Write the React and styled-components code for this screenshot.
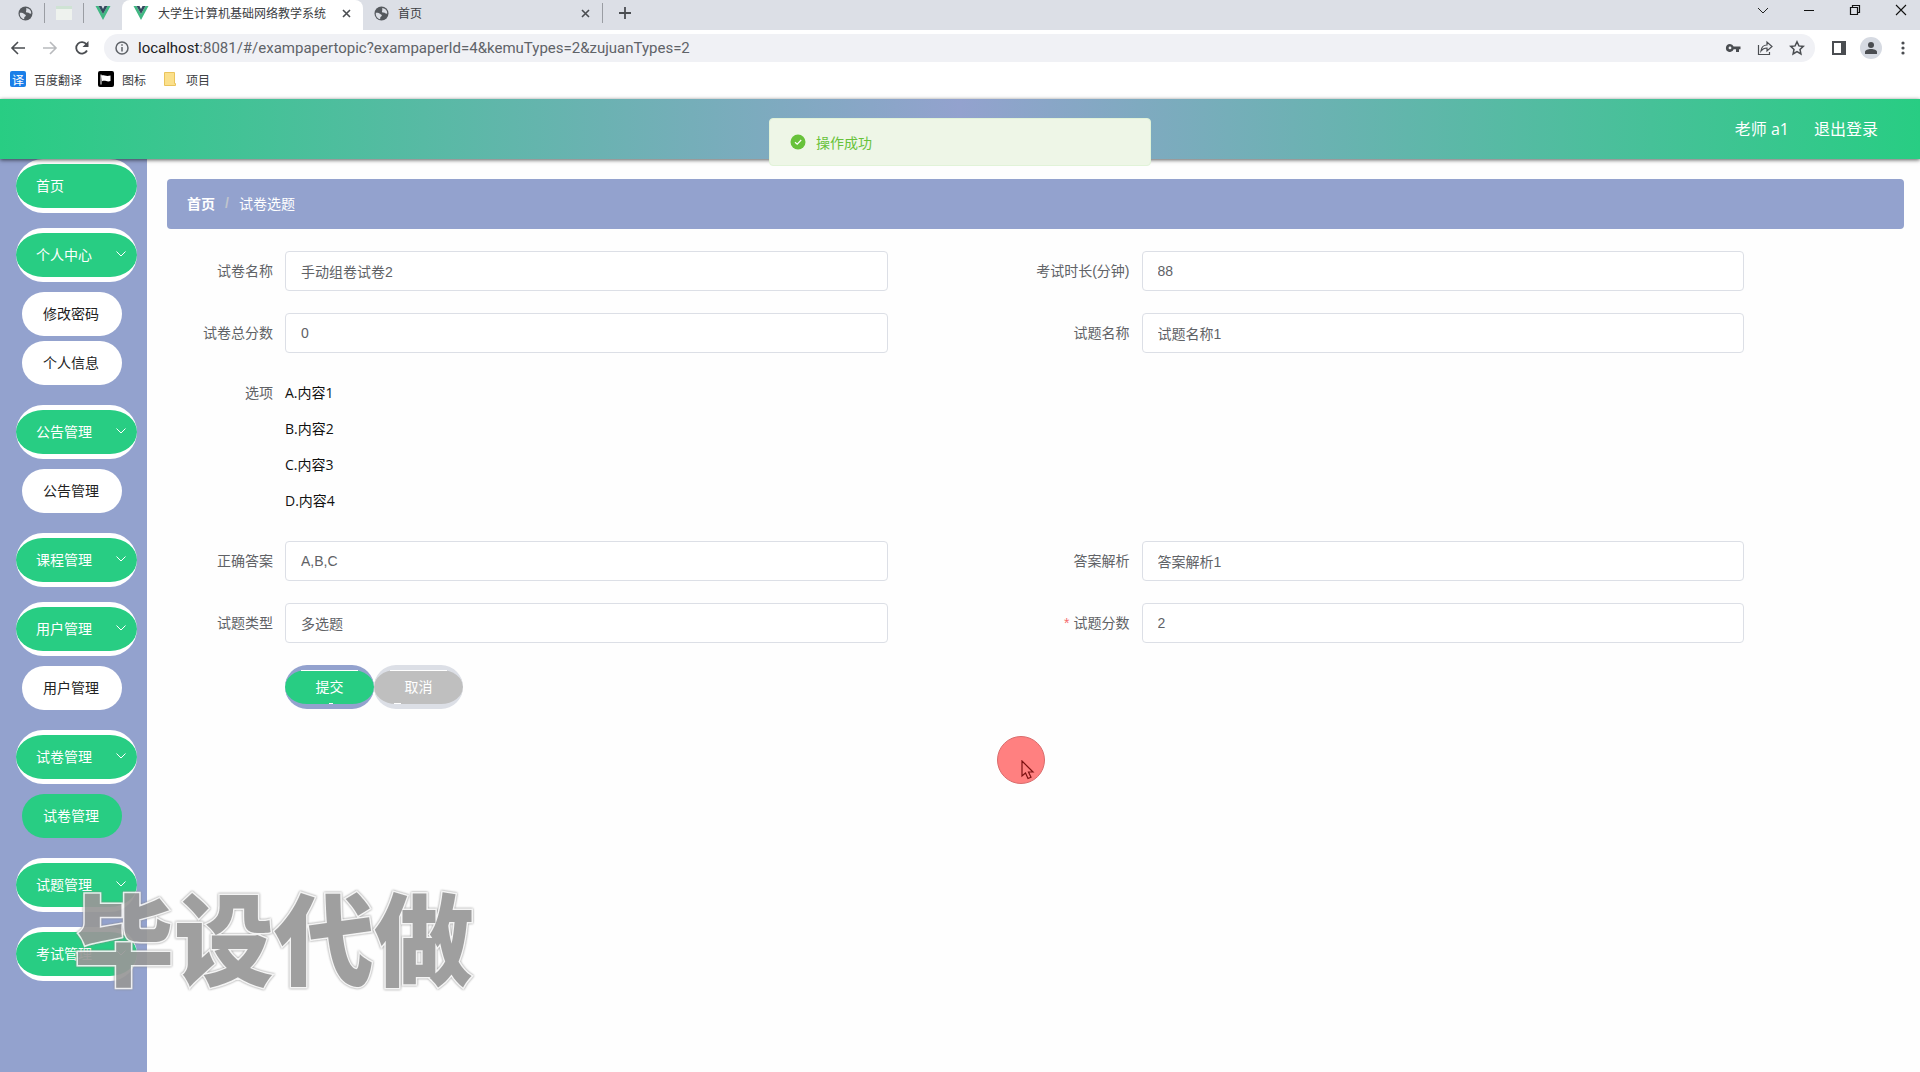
import React from "react";
import styled, { createGlobalStyle, css } from "styled-components";

const GREEN = "#28cd83";
const BLUE = "#93a2ce";
const UI = '"Open Sans", "Noto Sans CJK SC", sans-serif';
const PAGE = '"Liberation Sans", "Noto Sans CJK SC", sans-serif';

const GlobalStyle = createGlobalStyle`
  * { box-sizing: border-box; }
  body { margin: 0; background: #fefefe; font-family: ${PAGE}; font-size: 14px; }
  button, input { font-family: inherit; font-size: inherit; }
  button { cursor: pointer; }
`;

const Screen = styled.div`
  display: flex;
  flex-direction: column;
  min-height: 100vh;
`;

/* Browser chrome */
const TabStrip = styled.div`
  display: flex;
  align-items: center;
  height: 30px;
  padding: 0 11px 0 5px;
  background: #dcdfe6;
  font-family: ${UI};
  font-size: 12px;
  color: #3c4043;
`;
const PinnedTabs = styled.div`
  display: flex;
  align-items: center;
  width: 117px;
  padding-bottom: 4px;
`;
const Pin = styled.button`
  display: grid;
  place-items: center;
  width: 39px;
  height: 20px;
  padding: 0;
  border: 0;
  border-left: 1px solid ${(p) => (p.$line ? "#9a9da3" : "transparent")};
  background: none;
`;
const Tab = styled.div`
  display: flex;
  align-items: center;
  gap: 9px;
  width: ${(p) => p.$w}px;
  height: 30px;
  padding: 0 9px 4px 11px;
  border-radius: 8px 8px 0 0;
  background: ${(p) => (p.$active ? "#fff" : "transparent")};
`;
const TabTitle = styled.span`
  flex: 1;
  white-space: nowrap;
`;
const IconButton = styled.button`
  display: grid;
  place-items: center;
  flex: none;
  width: ${(p) => p.$w || 16}px;
  height: ${(p) => p.$w || 16}px;
  padding: 0;
  border: 0;
  border-radius: 50%;
  background: ${(p) => p.$bg || "none"};
  color: ${(p) => p.$color || "#4a4d51"};
`;
const NewTab = styled.div`
  height: 20px;
  margin-bottom: 4px;
  padding: 2px 14px;
  border-left: 1px solid #9a9da3;
`;
const WindowControls = styled.div`
  display: flex;
  gap: 30px;
  margin-left: auto;
  padding-bottom: 10px;
`;
const Toolbar = styled.div`
  display: flex;
  align-items: center;
  gap: 16px;
  height: 35px;
  padding: 0 9px 0 10px;
  background: #fff;
`;
const AddressBar = styled.div`
  display: flex;
  align-items: center;
  flex: 1;
  gap: 9px;
  height: 28px;
  margin-left: -2px;
  padding: 0 10px 0 11px;
  border-radius: 14px;
  background: #f0f1f5;
  font-family: Roboto, sans-serif;
  font-size: 15px;
  color: #5f6368;
`;
const Url = styled.span`
  flex: 1;
  b { font-weight: 400; color: #202124; }
`;
const AddressTools = styled.div`
  display: flex;
  gap: 16px;
`;
const BrowserTools = styled.div`
  display: flex;
  align-items: center;
  gap: 13px;
`;
const Bookmarks = styled.nav`
  display: flex;
  gap: 16px;
  height: 34px;
  padding: 5px 10px 0;
  background: #fff;
`;
const Bookmark = styled.a`
  display: flex;
  align-items: center;
  gap: 8px;
  height: 18px;
  font-size: 12px;
  color: #3c4043;
  text-decoration: none;
`;
const Translate = styled.span`
  display: grid;
  place-items: center;
  width: 16px;
  height: 16px;
  border-radius: 2px;
  background: #1a7fe8;
  color: #fff;
  font-size: 12px;
`;

/* Application */
const Header = styled.header`
  position: relative;
  z-index: 1;
  display: flex;
  align-items: center;
  justify-content: flex-end;
  gap: 25px;
  height: 60px;
  padding: 0 42px 2px;
  background: linear-gradient(90deg, ${GREEN}, ${BLUE}, ${GREEN});
  box-shadow: 0 1px 4px rgba(0, 0, 0, 0.65);
  color: #fff;
  font-family: ${UI};
  font-size: 16px;
`;
const Logout = styled.a`
  color: inherit;
  text-decoration: none;
`;
const Body = styled.div`
  display: flex;
  flex: 1;
`;
const Sidebar = styled.nav`
  display: flex;
  flex-direction: column;
  gap: 15px;
  width: 147px;
  padding: 0 10px 0 16px;
  background: ${BLUE};
`;
const MenuButton = styled.button`
  display: flex;
  align-items: center;
  justify-content: space-between;
  width: 100%;
  height: 54px;
  padding: 0 10px 2px 20px;
  border: solid #fff;
  border-width: 5px 0;
  border-radius: 30px;
  background: ${GREEN};
  color: #fff;
`;
const SubMenu = styled.ul`
  display: flex;
  flex-direction: column;
  gap: 5px;
  margin: 0;
  padding: 10px 0 5px 6px;
  list-style: none;
`;
const SubButton = styled.button`
  width: 100px;
  height: 44px;
  padding: 0 2px 2px 0;
  border: 0;
  border-radius: 22px;
  background: ${(p) => (p.$active ? GREEN : "#fff")};
  color: ${(p) => (p.$active ? "#fff" : "#222")};
`;
const Main = styled.main`
  flex: 1;
  min-width: 0;
  padding: 20px 16px 0 20px;
`;
const Breadcrumb = styled.nav`
  display: flex;
  align-items: center;
  gap: 10px;
  height: 50px;
  padding: 0 20px 2px;
  border-radius: 4px;
  background: ${BLUE};
  color: #fff;
  a { color: inherit; font-weight: 700; text-decoration: none; }
  i { color: #c0c4cc; font-style: normal; font-weight: 700; }
`;
const Form = styled.form`
  display: grid;
  grid-template-columns: 1fr 1fr;
  gap: 22px 136px;
  padding: 22px 160px 0 0;
`;
const Field = styled.div`
  display: flex;
  grid-column: ${(p) => (p.$wide ? "1 / -1" : "auto")};
  line-height: ${(p) => (p.$wide ? 36 : 40)}px;
`;
const labelStyle = css`
  flex: none;
  width: 118px;
  padding-right: 12px;
  color: #606266;
  text-align: right;
`;
const Label = styled.label`
  ${labelStyle}
  &::before { content: ${(p) => (p.$required ? '"*"' : "none")}; margin-right: 4px; color: #f56c6c; }
`;
const GroupLabel = styled.span`
  ${labelStyle}
`;
const Input = styled.input`
  flex: 1;
  min-width: 0;
  height: 40px;
  padding: 0 15px;
  border: 1px solid #dcdfe6;
  border-radius: 4px;
  background: #fff;
  color: #606266;
  outline: 0;
`;
const Options = styled.ul`
  margin: 0;
  padding: 0;
  list-style: none;
  color: #111;
  font-family: ${UI};
`;
const Actions = styled.div`
  display: flex;
  padding-left: 118px;
`;
const ActionButton = styled.button`
  position: relative;
  width: 89px;
  height: 44px;
  padding: 0 0 2px;
  border: solid ${(p) => (p.$plain ? "#dcdfe6" : BLUE)};
  border-width: 5px 0;
  border-radius: 22px;
  background: ${(p) => (p.$plain ? "#bfbfbf" : GREEN)};
  color: #fff;
  &::before {
    content: "";
    position: absolute;
    top: 0;
    left: 16px;
    right: 16px;
    height: 1px;
    background: #fff;
  }
  &::after {
    content: "";
    position: absolute;
    bottom: 0;
    left: ${(p) => (p.$plain ? 20 : 44)}px;
    width: ${(p) => (p.$plain ? 7 : 4)}px;
    height: 1px;
    background: #fff;
  }
`;
const Toast = styled.div`
  position: absolute;
  z-index: 2;
  top: 118px;
  left: 50%;
  display: flex;
  align-items: center;
  gap: 10px;
  width: 382px;
  height: 48px;
  padding: 0 20px;
  transform: translateX(-50%);
  border: 1px solid #e1f3d8;
  border-radius: 4px;
  background: #eef6e7;
  color: #67c23a;
`;
const Watermark = styled.div`
  position: absolute;
  z-index: 3;
  top: 862px;
  left: 74px;
  font: 900 100px/145px "Noto Sans CJK SC", sans-serif;
  color: #989898;
  opacity: 0.93;
  -webkit-text-stroke: 3px #f4f4f4;
  paint-order: stroke fill;
  filter: drop-shadow(0 0 1px #888);
  pointer-events: none;
`;
const Pointer = styled.div`
  position: absolute;
  z-index: 3;
  top: 736px;
  left: 997px;
  width: 48px;
  height: 48px;
  border-radius: 50%;
  background: #ff8080;
  border: 1px solid #d96c6c;
  pointer-events: none;
  svg { position: absolute; left: 23px; top: 23px; }
`;

const Vue = () => (
  <svg width="16" height="14" viewBox="0 0 15 14">
    <path d="M0 0h3l4.500 8L12 0h3L7.500 14z" fill="#41b883" />
    <path d="M3 0h3l1.500 3L9 0h3L7.500 8z" fill="#34495e" />
  </svg>
);
const Globe = () => (
  <svg width="15" height="15" viewBox="0 0 15 15">
    <circle cx="7.500" cy="7.500" r="7" fill="#55595e" />
    <path d="M1.800 6.800c1.700-.2 3.400.2 4.500 1.200.8.8 1.700.6 1.500 1.700-.2 1-1.600.9-1.500 2 .1.700-.1 1.200-.6 1.500C3 12.400 1.400 9.800 1.800 6.800zM8.500 1.900c1.900.3 3.600 1.500 4.400 3.300.3.900.3 1.700.3 2.400-1 .5-1.700-.3-2.500-.8-.9-.5-2-.1-2.600-.9-.5-.8.400-1.300.3-2.100-.1-.7-.5-1.200.1-1.900z" fill="#dcdfe6" />
  </svg>
);
const Cross = () => (
  <svg width="9" height="9" viewBox="0 0 9 9" stroke="currentColor" strokeWidth="1.600"><path d="M1 1l7 7M8 1L1 8" /></svg>
);
const Line = ({ size = 16, w = 1.6, d }) => (
  <svg width={size} height={size} viewBox="0 0 16 16" fill="none" stroke="currentColor" strokeWidth={w}><path d={d} /></svg>
);
const Chevron = () => (
  <svg width="12" height="8" viewBox="0 0 12 8" fill="none" stroke="#fff"><path d="M1.500 1.500L6 6l4.500-4.500" /></svg>
);

const menu = [
  { title: "首页" },
  { title: "个人中心", items: ["修改密码", "个人信息"] },
  { title: "公告管理", items: ["公告管理"] },
  { title: "课程管理", items: [] },
  { title: "用户管理", items: ["用户管理"] },
  { title: "试卷管理", items: ["试卷管理"], active: true },
  { title: "试题管理", items: [] },
  { title: "考试管理", items: [] },
];

const TextField = ({ id, label, value, required }) => (
  <Field>
    <Label htmlFor={id} $required={required}>{label}</Label>
    <Input id={id} defaultValue={value} />
  </Field>
);

export default function App() {
  return (
    <Screen>
      <GlobalStyle />
      <TabStrip>
        <PinnedTabs>
          <Pin aria-label="首页"><Globe /></Pin>
          <Pin $line aria-label="表格">
            <svg width="16" height="14" viewBox="0 0 16 14"><path d="M0 0h16v14H0z" fill="#eef2ee" /><path d="M0 0h16v3H0z" fill="#cfe3d4" /></svg>
          </Pin>
          <Pin $line aria-label="Vue"><Vue /></Pin>
        </PinnedTabs>
        <Tab $active $w={241}>
          <Vue />
          <TabTitle>大学生计算机基础网络教学系统</TabTitle>
          <IconButton aria-label="关闭"><Cross /></IconButton>
        </Tab>
        <Tab $w={239}>
          <Globe />
          <TabTitle>首页</TabTitle>
          <IconButton aria-label="关闭"><Cross /></IconButton>
        </Tab>
        <NewTab><IconButton aria-label="新标签页"><Line d="M8 2v12M2 8h12" w={1.8} /></IconButton></NewTab>
        <WindowControls>
          <IconButton $color="#222" aria-label="搜索标签页"><Line w={1} d="M3 6l5 5 5-5" /></IconButton>
          <IconButton $color="#111" aria-label="最小化"><Line w={1} d="M3 8.500h10" /></IconButton>
          <IconButton $color="#111" aria-label="还原"><Line w={1.2} d="M3.500 5.500h7v7h-7zM5.500 5.500v-2h7v7h-2" /></IconButton>
          <IconButton $color="#111" aria-label="关闭窗口"><Line w={1.1} d="M3 3l10 10M13 3L3 13" /></IconButton>
        </WindowControls>
      </TabStrip>
      <Toolbar>
        <IconButton aria-label="后退"><Line d="M15 8H2M8 2L2 8l6 6" /></IconButton>
        <IconButton $color="#b8babd" aria-label="前进"><Line d="M1 8h13M8 2l6 6-6 6" /></IconButton>
        <IconButton aria-label="刷新">
          <svg width="16" height="16" viewBox="0 0 16 16"><path d="M13 10.500A5.700 5.700 0 1 1 12.500 4.500" fill="none" stroke="currentColor" strokeWidth="1.800" /><path d="M14.500 1v6h-6z" fill="currentColor" /></svg>
        </IconButton>
        <AddressBar>
          <svg width="14" height="14" viewBox="0 0 14 14" fill="none" stroke="#5f6368" strokeWidth="1.500"><circle cx="7" cy="7" r="6" /><path d="M7 6v4.500M7 3.300v1.500" /></svg>
          <Url><b>localhost</b>:8081/#/exampapertopic?exampaperId=4&amp;kemuTypes=2&amp;zujuanTypes=2</Url>
          <AddressTools>
            <IconButton aria-label="密码">
              <svg width="16" height="16" viewBox="0 0 16 16"><path fillRule="evenodd" d="M5 4a4 4 0 1 0 3.700 5.300H11V12h3V9.300h1.500V6.500H8.600A4 4 0 0 0 5 4zm0 2.500a1.400 1.400 0 1 1 0 2.800 1.400 1.400 0 0 1 0-2.800z" fill="currentColor" /></svg>
            </IconButton>
            <IconButton aria-label="分享"><Line w={1.2} d="M1.500 5v9.500h11V12M4 11c.5-4 3-6 6-6V2l5 4.500-5 4.500V8C7.500 8 5.500 9 4 11z" /></IconButton>
            <IconButton aria-label="收藏"><Line w={1.5} d="M8 1.800l1.900 4.100 4.400.5L11 9.400l.9 4.500L8 11.600l-3.900 2.300.9-4.500-3.300-3 4.400-.5z" /></IconButton>
          </AddressTools>
        </AddressBar>
        <BrowserTools>
          <IconButton aria-label="侧边栏">
            <svg width="14" height="14" viewBox="0 0 14 14"><path d="M1 1h12v12H1z" fill="none" stroke="currentColor" strokeWidth="2" /><path d="M9 1h4v12H9z" fill="currentColor" /></svg>
          </IconButton>
          <IconButton $w={22} $bg="#d6dae2" aria-label="用户">
            <svg width="14" height="14" viewBox="0 0 14 14" fill="currentColor"><circle cx="7" cy="4" r="3" /><path d="M1 13v-2c0-2 3-3 6-3s6 1 6 3v2z" /></svg>
          </IconButton>
          <IconButton aria-label="菜单">
            <svg width="4" height="14" viewBox="0 0 4 14" fill="currentColor"><circle cx="2" cy="2" r="1.600" /><circle cx="2" cy="7" r="1.600" /><circle cx="2" cy="12" r="1.600" /></svg>
          </IconButton>
        </BrowserTools>
      </Toolbar>
      <Bookmarks>
        <Bookmark href="#fanyi"><Translate>译</Translate>百度翻译</Bookmark>
        <Bookmark href="#icons">
          <svg width="16" height="16" viewBox="0 0 16 16"><rect width="16" height="16" rx="2" /><path d="M3 4.500c2.500-1.200 4.500 1.300 9.500 0v5.500c-3.500 1.400-5-1-8.500.2z" fill="#fff" /><path d="M3 3.500v10" stroke="#fff" /></svg>
          图标
        </Bookmark>
        <Bookmark href="#projects">
          <svg width="16" height="16" viewBox="0 0 16 16"><path d="M2.500 1.500h10v11h1v2h-11z" fill="#fbe08b" stroke="#eac45c" /></svg>
          项目
        </Bookmark>
      </Bookmarks>
      <Header>
        <span>老师 a1</span>
        <Logout href="#logout">退出登录</Logout>
      </Header>
      <Body>
        <Sidebar>
          {menu.map((group) => (
            <div key={group.title}>
              <MenuButton type="button">{group.title}{group.items && <Chevron />}</MenuButton>
              {group.items?.length > 0 && (
                <SubMenu>
                  {group.items.map((item) => (
                    <li key={item}><SubButton type="button" $active={group.active}>{item}</SubButton></li>
                  ))}
                </SubMenu>
              )}
            </div>
          ))}
        </Sidebar>
        <Main>
          <Breadcrumb><a href="#home">首页</a><i>/</i><span>试卷选题</span></Breadcrumb>
          <Form>
            <TextField id="paper" label="试卷名称" value="手动组卷试卷2" />
            <TextField id="duration" label="考试时长(分钟)" value="88" />
            <TextField id="total" label="试卷总分数" value="0" />
            <TextField id="topic" label="试题名称" value="试题名称1" />
            <Field $wide>
              <GroupLabel>选项</GroupLabel>
              <Options><li>A.内容1</li><li>B.内容2</li><li>C.内容3</li><li>D.内容4</li></Options>
            </Field>
            <TextField id="answer" label="正确答案" value="A,B,C" />
            <TextField id="analysis" label="答案解析" value="答案解析1" />
            <TextField id="type" label="试题类型" value="多选题" />
            <TextField id="score" label="试题分数" value="2" required />
            <Actions>
              <ActionButton type="button">提交</ActionButton>
              <ActionButton type="button" $plain>取消</ActionButton>
            </Actions>
          </Form>
        </Main>
      </Body>
      <Toast role="status">
        <svg width="16" height="16" viewBox="0 0 16 16"><circle cx="8" cy="8" r="7.500" fill="#67c23a" /><path d="M5 8.200l2.200 2L11.200 6" fill="none" stroke="#fff" strokeWidth="1.200" /></svg>
        操作成功
      </Toast>
      <Watermark>毕设代做</Watermark>
      <Pointer>
        <svg width="14" height="20" viewBox="0 0 14 20"><path d="M1 1v15l3.500-3 2.500 5.500 3-1.200-2.500-5.300H12z" fill="#ff8080" stroke="#7c1111" strokeWidth="1.200" /></svg>
      </Pointer>
    </Screen>
  );
}
